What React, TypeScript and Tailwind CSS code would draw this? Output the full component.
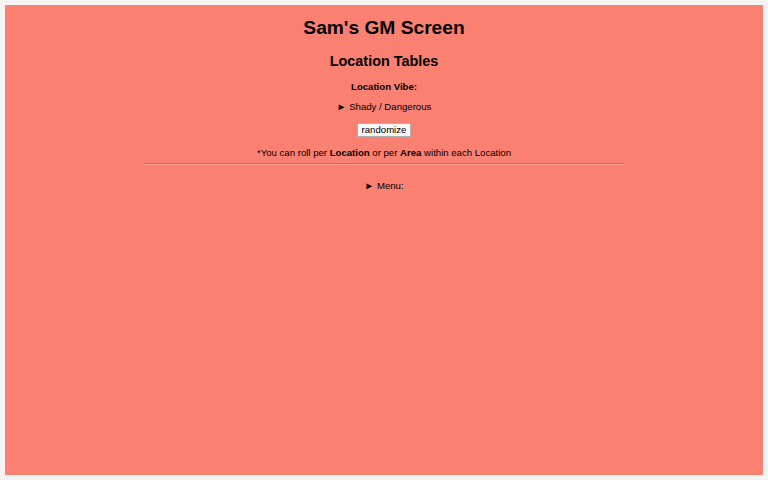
export default function App() {
  return (
    <div className="min-h-[480px] bg-[#f4f4f4] p-[5px] font-['Liberation_Sans',Arial,sans-serif] text-black">
      <div className="flex h-[470px] flex-col items-center bg-[#fa8072] text-center">
        <h1 className="mt-[11px] text-[19.2px] font-bold leading-[23px]">Sam's GM Screen</h1>
        <h2 className="mt-[14px] text-[14.4px] font-bold leading-[17px]">Location Tables</h2>
        <div className="mt-[11px] text-[9.6px] font-bold leading-[11px]">Location Vibe:</div>
        <div className="mt-[9px] text-[9.6px] leading-[11px]">
          <span className="mr-[3px]">►</span>Shady / Dangerous
        </div>
        <button className="mt-[11px] border border-[#b0b0b0] bg-[#f8f8f8] px-[4px] text-[9.6px] leading-[12px]">
          randomize
        </button>
        <p className="mt-[10px] text-[9.6px] leading-[11px]">
          *You can roll per <b>Location</b> or per <b>Area</b> within each Location
        </p>
        <hr className="mt-[5px] w-[480px] border-t border-t-[#c06a60] border-b border-b-[#ff9c90]" />
        <div className="mt-[15px] text-[9.6px] leading-[11px]">
          <span className="mr-[3px]">►</span>Menu:
        </div>
      </div>
    </div>
  );
}
